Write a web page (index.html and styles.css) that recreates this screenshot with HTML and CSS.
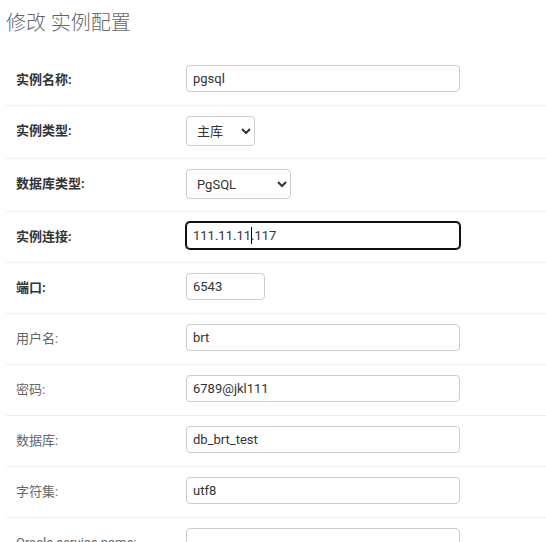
FILE: index.html
```html
<!DOCTYPE html>
<html lang="zh">
<head>
<meta charset="utf-8">
<title>修改 实例配置</title>
<link rel="stylesheet" href="styles.css">
</head>
<body>
<div class="page">
  <h1 class="title">修改 实例配置</h1>
  <form class="form">
    <div class="row">
      <label class="req">实例名称:</label>
      <input class="text wide" type="text" value="pgsql">
    </div>
    <div class="row tall">
      <label class="req">实例类型:</label>
      <select class="sel sel-type"><option>主库</option></select>
    </div>
    <div class="row tall">
      <label class="req">数据库类型:</label>
      <select class="sel sel-db"><option>PgSQL</option></select>
    </div>
    <div class="row">
      <label class="req">实例连接:</label>
      <div class="field">
        <input class="text wide focused" type="text" value="111.11.11.117">
        <span class="caret"></span>
      </div>
    </div>
    <div class="row">
      <label class="req">端口:</label>
      <input class="text short" type="text" value="6543">
    </div>
    <div class="row">
      <label>用户名:</label>
      <input class="text wide" type="text" value="brt">
    </div>
    <div class="row">
      <label>密码:</label>
      <input class="text wide" type="text" value="6789@jkl111">
    </div>
    <div class="row">
      <label>数据库:</label>
      <input class="text wide" type="text" value="db_brt_test">
    </div>
    <div class="row">
      <label>字符集:</label>
      <input class="text wide" type="text" value="utf8">
    </div>
    <div class="row">
      <label>Oracle service name:</label>
      <input class="text wide" type="text" value="">
    </div>
  </form>
</div>
</body>
</html>
```
FILE: styles.css
```css
html, body {
  margin: 0;
  padding: 0;
  background: #fff;
}
body {
  font-family: Roboto, "Noto Sans CJK SC", sans-serif;
  font-size: 13px;
  color: #333;
}
.page {
  padding-left: 6px;
}
.title {
  margin: 0;
  height: 55px;
  box-sizing: border-box;
  padding-top: 10px;
  font-size: 20px;
  line-height: 26px;
  font-weight: 300;
  color: #666;
}
.form {
  margin: 0;
}
.row {
  display: flex;
  align-items: flex-start;
  height: 30px;
  padding: 10px;
  border-bottom: 1px solid #eee;
}
.row.tall {
  height: 32px;
}
.row label {
  width: 160px;
  flex: none;
  padding-right: 10px;
  padding-top: 7px;
  line-height: 16px;
  color: #666;
  white-space: nowrap;
}
.row label.req {
  font-weight: bold;
  color: #333;
}
.text {
  box-sizing: border-box;
  height: 27px;
  margin: 0;
  padding: 5px 6px;
  border: 1px solid #ccc;
  border-radius: 4px;
  font-family: Roboto, "Noto Sans CJK SC", sans-serif;
  font-size: 13px;
  color: #333;
  background: #fff;
  outline: none;
}
.wide {
  width: 274px;
}
.short {
  width: 79px;
}
.field {
  position: relative;
  display: flex;
}
.focused {
  border: 1px solid #101010;
  box-shadow: 0 0 0 1px #101010;
}
.caret {
  position: absolute;
  left: 65px;
  top: 5px;
  width: 1px;
  height: 17px;
  background: #000;
}
.sel {
  box-sizing: border-box;
  height: 30px;
  margin: 0;
  padding: 0 4px 0 6px;
  border: 1px solid #ccc;
  border-radius: 4px;
  background: #fff;
  font-family: Roboto, "Noto Sans CJK SC", sans-serif;
  font-size: 13px;
  color: #333;
}
.sel-type {
  width: 69px;
}
.sel-db {
  width: 105px;
}
```
